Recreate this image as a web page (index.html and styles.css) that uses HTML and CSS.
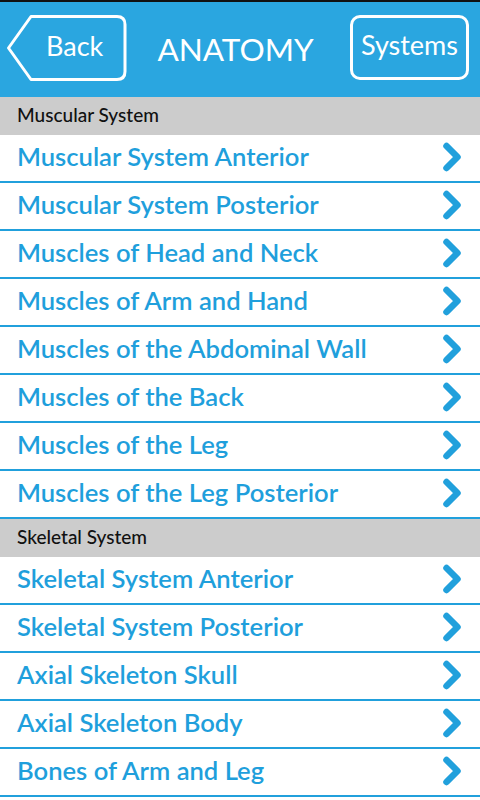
FILE: index.html
```html
<!DOCTYPE html>
<html>
<head>
<meta charset="utf-8">
<link rel="stylesheet" href="styles.css">
</head>
<body>
<div class="statusbar"></div>
<header class="topbar">
  <div class="back-btn">
    <svg class="back-outline" width="121" height="66" viewBox="0 0 121 66">
      <path d="M2.5 33 L25 1.5 L111 1.5 Q119 1.5 119 9.5 L119 56.5 Q119 64.5 111 64.5 L25 64.5 Z" fill="none" stroke="#fff" stroke-width="3" stroke-linejoin="round"/>
    </svg>
    <span class="back-label">Back</span>
  </div>
  <h1 class="title">ANATOMY</h1>
  <div class="systems-btn">Systems</div>
</header>

<div class="section">Muscular System</div>
<ul class="list">
  <li class="row"><span>Muscular System Anterior</span><svg class="chev" viewBox="0 0 22 30" width="22" height="30"><polyline points="5.5,4 16.5,15 5.5,26" fill="none" stroke="#21a0dc" stroke-width="6.5" stroke-linecap="round" stroke-linejoin="round"/></svg></li>
  <li class="row"><span>Muscular System Posterior</span><svg class="chev" viewBox="0 0 22 30" width="22" height="30"><polyline points="5.5,4 16.5,15 5.5,26" fill="none" stroke="#21a0dc" stroke-width="6.5" stroke-linecap="round" stroke-linejoin="round"/></svg></li>
  <li class="row"><span>Muscles of Head and Neck</span><svg class="chev" viewBox="0 0 22 30" width="22" height="30"><polyline points="5.5,4 16.5,15 5.5,26" fill="none" stroke="#21a0dc" stroke-width="6.5" stroke-linecap="round" stroke-linejoin="round"/></svg></li>
  <li class="row"><span>Muscles of Arm and Hand</span><svg class="chev" viewBox="0 0 22 30" width="22" height="30"><polyline points="5.5,4 16.5,15 5.5,26" fill="none" stroke="#21a0dc" stroke-width="6.5" stroke-linecap="round" stroke-linejoin="round"/></svg></li>
  <li class="row"><span>Muscles of the Abdominal Wall</span><svg class="chev" viewBox="0 0 22 30" width="22" height="30"><polyline points="5.5,4 16.5,15 5.5,26" fill="none" stroke="#21a0dc" stroke-width="6.5" stroke-linecap="round" stroke-linejoin="round"/></svg></li>
  <li class="row"><span>Muscles of the Back</span><svg class="chev" viewBox="0 0 22 30" width="22" height="30"><polyline points="5.5,4 16.5,15 5.5,26" fill="none" stroke="#21a0dc" stroke-width="6.5" stroke-linecap="round" stroke-linejoin="round"/></svg></li>
  <li class="row"><span>Muscles of the Leg</span><svg class="chev" viewBox="0 0 22 30" width="22" height="30"><polyline points="5.5,4 16.5,15 5.5,26" fill="none" stroke="#21a0dc" stroke-width="6.5" stroke-linecap="round" stroke-linejoin="round"/></svg></li>
  <li class="row"><span>Muscles of the Leg Posterior</span><svg class="chev" viewBox="0 0 22 30" width="22" height="30"><polyline points="5.5,4 16.5,15 5.5,26" fill="none" stroke="#21a0dc" stroke-width="6.5" stroke-linecap="round" stroke-linejoin="round"/></svg></li>
</ul>

<div class="section">Skeletal System</div>
<ul class="list">
  <li class="row"><span>Skeletal System Anterior</span><svg class="chev" viewBox="0 0 22 30" width="22" height="30"><polyline points="5.5,4 16.5,15 5.5,26" fill="none" stroke="#21a0dc" stroke-width="6.5" stroke-linecap="round" stroke-linejoin="round"/></svg></li>
  <li class="row"><span>Skeletal System Posterior</span><svg class="chev" viewBox="0 0 22 30" width="22" height="30"><polyline points="5.5,4 16.5,15 5.5,26" fill="none" stroke="#21a0dc" stroke-width="6.5" stroke-linecap="round" stroke-linejoin="round"/></svg></li>
  <li class="row"><span>Axial Skeleton Skull</span><svg class="chev" viewBox="0 0 22 30" width="22" height="30"><polyline points="5.5,4 16.5,15 5.5,26" fill="none" stroke="#21a0dc" stroke-width="6.5" stroke-linecap="round" stroke-linejoin="round"/></svg></li>
  <li class="row"><span>Axial Skeleton Body</span><svg class="chev" viewBox="0 0 22 30" width="22" height="30"><polyline points="5.5,4 16.5,15 5.5,26" fill="none" stroke="#21a0dc" stroke-width="6.5" stroke-linecap="round" stroke-linejoin="round"/></svg></li>
  <li class="row"><span>Bones of Arm and Leg</span><svg class="chev" viewBox="0 0 22 30" width="22" height="30"><polyline points="5.5,4 16.5,15 5.5,26" fill="none" stroke="#21a0dc" stroke-width="6.5" stroke-linecap="round" stroke-linejoin="round"/></svg></li>
</ul>
</body>
</html>
```

FILE: styles.css
```css
html, body {
  margin: 0;
  padding: 0;
  background: #ffffff;
  font-family: Lato, "Open Sans", "Liberation Sans", sans-serif;
  width: 480px;
  overflow: hidden;
}

.statusbar {
  height: 2px;
  background: #111111;
}

.topbar {
  height: 95px;
  background: #2aa6e0;
  display: flex;
  align-items: flex-start;
  justify-content: space-between;
  padding: 13px 11px 0 6px;
  box-sizing: border-box;
  color: #ffffff;
}

.back-btn {
  position: relative;
  width: 121px;
  height: 66px;
  display: flex;
  align-items: center;
  box-sizing: border-box;
  padding-left: 40px;
  padding-bottom: 6px;
}

.back-outline {
  position: absolute;
  left: 0;
  top: 0;
}

.back-label {
  font-size: 27px;
  line-height: 1;
  font-weight: 400;
}

.title {
  margin: 0;
  align-self: center;
  font-size: 31.5px;
  font-weight: 400;
  line-height: 1;
  padding-bottom: 12px;
  padding-right: 6px;
}

.systems-btn {
  width: 119px;
  height: 65px;
  box-sizing: border-box;
  border: 3px solid #ffffff;
  border-radius: 10px;
  display: flex;
  align-items: center;
  justify-content: center;
  font-size: 27px;
  line-height: 1;
  padding-bottom: 6px;
}

.section {
  height: 38px;
  background: #cccccc;
  color: #111111;
  font-size: 19px;
  font-weight: 500;
  display: flex;
  align-items: center;
  padding-left: 17px;
  padding-bottom: 3px;
  box-sizing: border-box;
}

.list {
  list-style: none;
  margin: 0;
  padding: 0;
}

.row {
  height: 48px;
  box-sizing: border-box;
  border-bottom: 2px solid #21a0dc;
  display: flex;
  align-items: center;
  justify-content: space-between;
  padding: 0 17px 3px 17px;
  color: #1f9fdc;
  font-size: 25.6px;
  font-weight: 600;
}

.row span {
  line-height: 1;
}

.chev {
  flex: none;
}
```
